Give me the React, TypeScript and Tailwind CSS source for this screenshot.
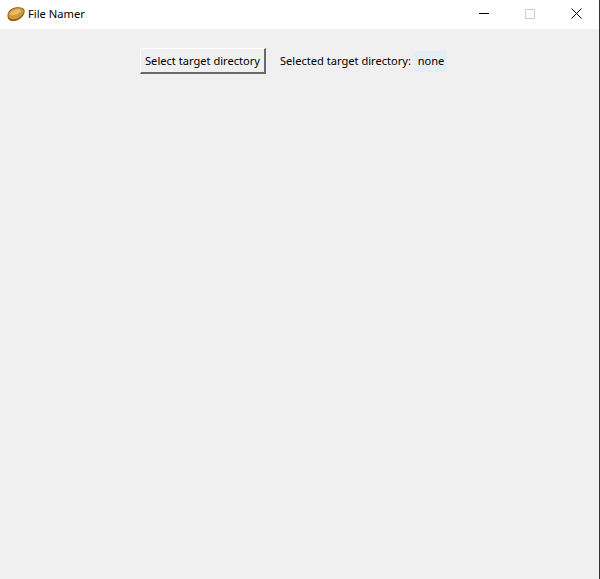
function PotatoIcon() {
  return (
    <svg width="18" height="15" viewBox="0 0 18 15" className="shrink-0">
      <path d="M0.5 8 C0.8 4.5 4 1.5 8 0.6 C12 -0.2 17 0.5 17.6 3.5 C18 7 15.5 10.5 11.5 12.8 C7.5 15 0.2 15 0.5 8 Z" fill="#8a5a1c" />
      <path d="M1.3 7.8 C1.6 5 4.6 2.2 8.4 1.3 C12 0.6 16.2 1.2 16.7 3.6 C17 6.4 14.6 9.4 11 11.3 C7.4 13.2 1.2 13.2 1.3 7.8 Z" fill="#d09a3a" />
      <path d="M3 6.8 C4 4.4 7.5 2.4 11.5 2.2 C14.5 2.2 14.5 4.6 11.5 6.4 C8.5 8.2 3 9.2 3 6.8 Z" fill="#e8bd6a" />
    </svg>
  );
}

function TitleBar() {
  return (
    <div className="flex h-[29px] items-center justify-between bg-white">
      <div className="flex items-center gap-[3px] pl-[7px]">
        <PotatoIcon />
        <span className="text-[11.2px] text-black">File Namer</span>
      </div>
      <div className="flex items-center pb-[2px]">
        <div className="flex h-[27px] w-[46px] items-center justify-center">
          <div className="h-px w-[10px] bg-black" />
        </div>
        <div className="flex h-[27px] w-[46px] items-center justify-center">
          <div className="h-[10px] w-[10px] border border-[#cccccc]" />
        </div>
        <div className="flex h-[27px] w-[46px] items-center justify-center">
          <svg width="11" height="11" viewBox="0 0 11 11">
            <path d="M0.5 0.5 L10.5 10.5 M10.5 0.5 L0.5 10.5" stroke="#000" strokeWidth="1" fill="none" />
          </svg>
        </div>
      </div>
    </div>
  );
}

export default function App() {
  return (
    <div className="flex h-[579px] w-[600px] flex-col overflow-hidden border-r border-[#333333] bg-[#f0f0f0] font-['Noto_Sans',sans-serif]">
      <TitleBar />
      <div className="flex items-center pl-[140px] pt-[19px] text-[11.1px] text-black">
        <button className="h-[26px] w-[126px] whitespace-nowrap border border-b-2 border-r-2 border-t-white border-l-white border-b-[#696969] border-r-[#696969] bg-[#f0f0f0] pt-px text-center">
          Select target directory
        </button>
        <span className="ml-[14px] whitespace-nowrap">Selected target directory:</span>
        <span className="ml-[3px] flex h-[21px] w-[33px] items-center justify-center bg-[#e6eef5] pl-px">none</span>
      </div>
    </div>
  );
}
